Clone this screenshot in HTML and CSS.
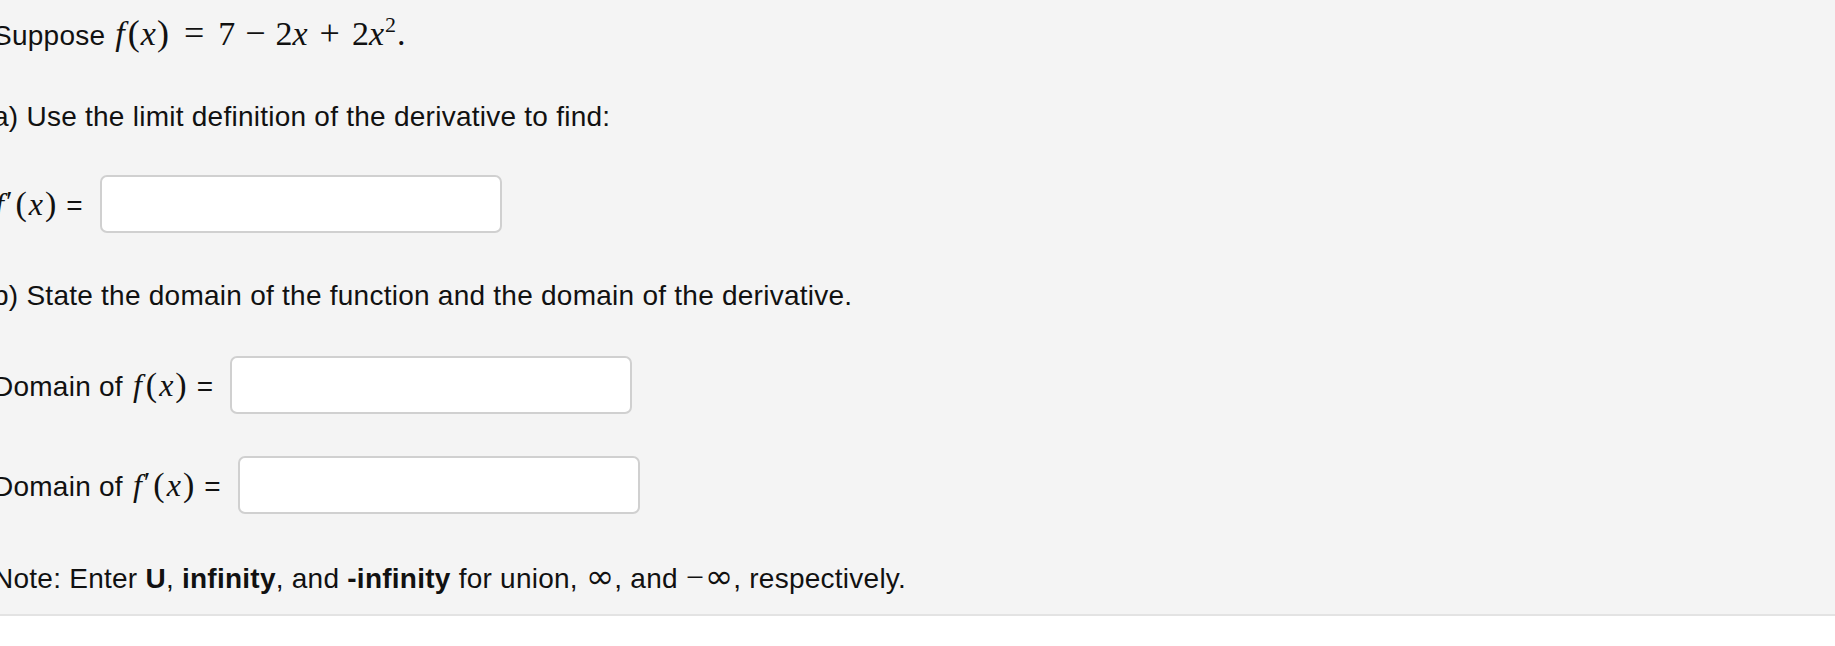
FILE: index.html
```html
<!DOCTYPE html>
<html lang="en">
<head>
<meta charset="utf-8">
<title>Derivative problem</title>
<link rel="stylesheet" href="styles.css">
</head>
<body>
<div class="problem">
  <p class="line l1">Suppose <span class="math big"><span class="mi f">f</span><span class="paren">(</span><span class="mi">x</span><span class="paren">)</span><span class="mo rel">=</span>7<span class="mo bin">−</span>2<span class="mi">x</span><span class="mo bin2">+</span>2<span class="mi">x</span><sup class="sup">2</sup>.</span></p>
  <p class="line l2">a) Use the limit definition of the derivative to find:</p>
  <div class="row r1">
    <span class="label"><span class="math"><span class="mi f">f</span><span class="prime">′</span><span class="paren">(</span><span class="mi">x</span><span class="paren">)</span></span> =</span>
    <input class="answer" type="text" aria-label="f prime of x">
  </div>
  <p class="line l3">b) State the domain of the function and the domain of the derivative.</p>
  <div class="row r2">
    <span class="label">Domain of <span class="math"><span class="mi f">f</span><span class="paren">(</span><span class="mi">x</span><span class="paren">)</span></span> =</span>
    <input class="answer" type="text" aria-label="Domain of f">
  </div>
  <div class="row r3">
    <span class="label">Domain of <span class="math"><span class="mi f">f</span><span class="prime">′</span><span class="paren">(</span><span class="mi">x</span><span class="paren">)</span></span> =</span>
    <input class="answer" type="text" aria-label="Domain of f prime">
  </div>
  <p class="line l4">Note: Enter <b>U</b>, <b>infinity</b>, and <b>-infinity</b> for union, <span class="math"><span class="inf">∞</span></span>, and <span class="math"><span class="neg">−</span><span class="inf">∞</span></span>, respectively.</p>
</div>
</body>
</html>
```

FILE: styles.css
```css
html, body {
  margin: 0;
  padding: 0;
  background: #ffffff;
}

.problem {
  background: #f4f4f4;
  border-bottom: 2px solid #e3e3e3;
  margin-left: -7px;
  padding: 13px 0 15px 0;
  font-family: "Liberation Sans", Arial, sans-serif;
  font-size: 28px;
  letter-spacing: 0.25px;
  color: #111111;
}

.line {
  margin: 0;
  line-height: 40px;
  white-space: nowrap;
}

.l1 { height: 40px; }
.l2 { margin-top: 44px; }
.l3 { margin-top: 43px; }
.l4 { margin-top: 42px; }

.row {
  display: flex;
  align-items: center;
  height: 58px;
}

.r1 { margin-top: 38px; }
.r2 { margin-top: 40px; }
.r3 { margin-top: 42px; }

.label {
  white-space: nowrap;
  margin-right: 17px;
}

.answer {
  box-sizing: border-box;
  width: 402px;
  height: 58px;
  background: #ffffff;
  border: 2px solid #d0d0d0;
  border-radius: 7px;
  margin: 0;
  padding: 0 10px;
  font: inherit;
}

.math {
  font-family: "Liberation Serif", "Times New Roman", serif;
  font-size: 32px;
  letter-spacing: 0;
}

.math.big {
  font-size: 34px;
}

.mi {
  font-style: italic;
}

.f {
  padding-left: 2px;
  padding-right: 2px;
}

.paren {
  font-size: 34px;
  padding: 0 2px;
}

.big .paren {
  font-size: 36px;
  padding: 0 1px;
}

.mo {
  font-size: 36px;
  line-height: 0;
}

.rel {
  padding: 0 14px;
}

.bin {
  padding: 0 10px;
}

.bin2 {
  padding: 0 12px;
}

.prime {
  font-size: 30px;
  line-height: 0;
  vertical-align: 4px;
  margin-left: 0;
  padding-right: 1px;
}

.sup {
  font-size: 22px;
  line-height: 0;
  vertical-align: 13px;
  padding: 0 1px;
}

.inf {
  font-family: "DejaVu Sans", sans-serif;
  font-size: 34px;
}

.neg {
  padding-right: 1px;
}

b {
  font-weight: 700;
}
```
